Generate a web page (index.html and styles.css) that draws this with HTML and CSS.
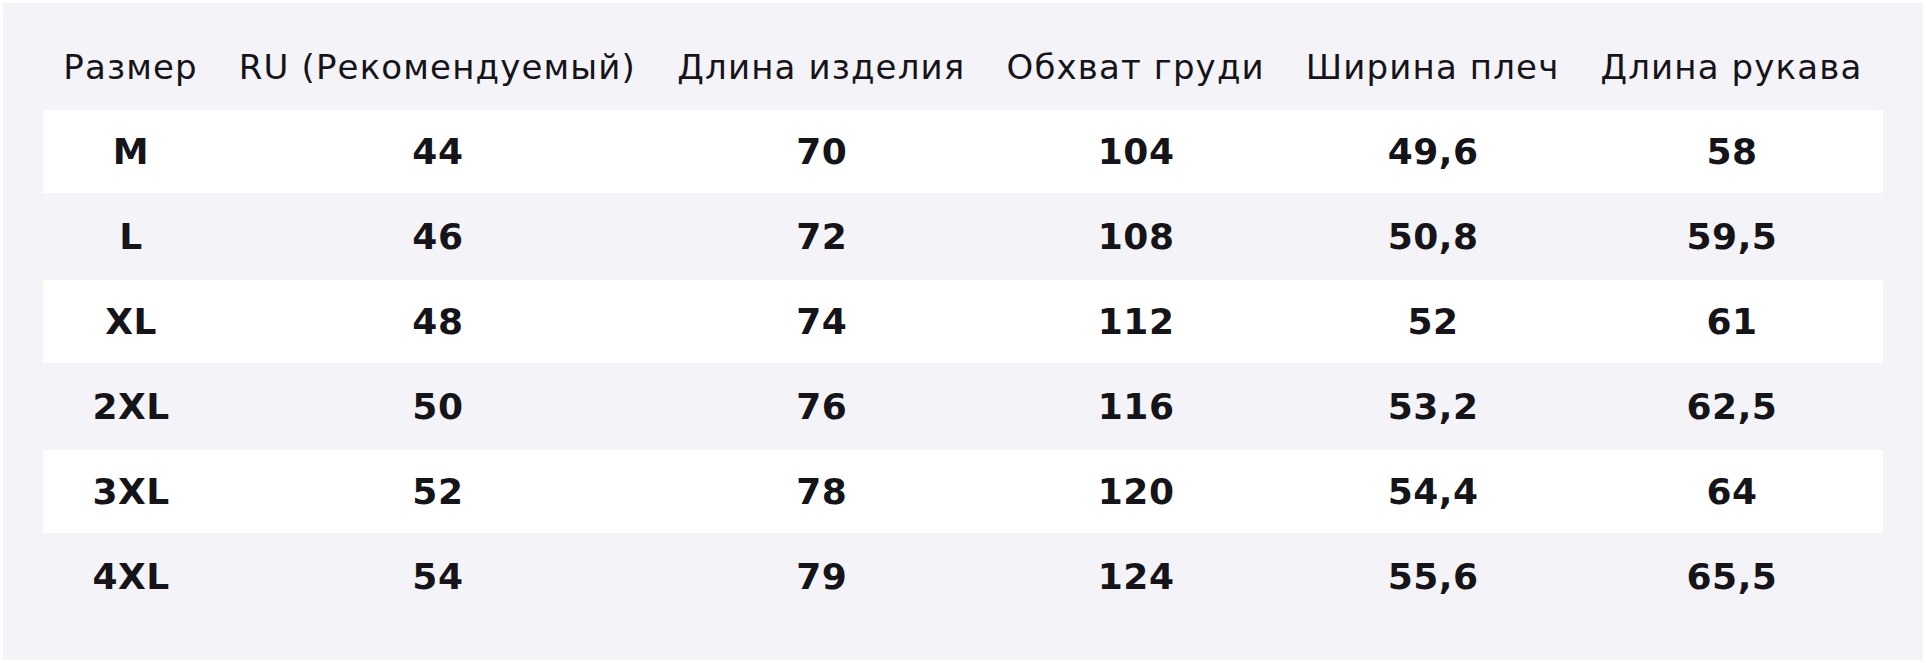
FILE: index.html
```html
<!DOCTYPE html>
<html lang="ru">
<head>
<meta charset="utf-8">
<title>Таблица размеров</title>
<link rel="stylesheet" href="styles.css">
</head>
<body>
<div class="sheet">
  <table class="sizes">
    <thead>
      <tr>
        <th>Размер</th>
        <th>RU (Рекомендуемый)</th>
        <th>Длина изделия</th>
        <th>Обхват груди</th>
        <th>Ширина плеч</th>
        <th>Длина рукава</th>
      </tr>
    </thead>
    <tbody>
      <tr class="odd"><td>M</td><td>44</td><td>70</td><td>104</td><td>49,6</td><td>58</td></tr>
      <tr><td>L</td><td>46</td><td>72</td><td>108</td><td>50,8</td><td>59,5</td></tr>
      <tr class="odd"><td>XL</td><td>48</td><td>74</td><td>112</td><td>52</td><td>61</td></tr>
      <tr><td>2XL</td><td>50</td><td>76</td><td>116</td><td>53,2</td><td>62,5</td></tr>
      <tr class="odd"><td>3XL</td><td>52</td><td>78</td><td>120</td><td>54,4</td><td>64</td></tr>
      <tr><td>4XL</td><td>54</td><td>79</td><td>124</td><td>55,6</td><td>65,5</td></tr>
    </tbody>
  </table>
</div>
</body>
</html>
```
FILE: styles.css
```css
html, body {
  margin: 0;
  background: #ffffff;
}
body {
  padding: 3px;
  font-family: "DejaVu Sans", Verdana, sans-serif;
  color: #141419;
}
.sheet {
  background: #f4f3f8;
  width: 1920px;
  height: 657px;
  box-sizing: border-box;
  padding: 38px 40px 40px 40px;
}
.sizes {
  width: 100%;
  border-collapse: separate;
  border-spacing: 0 2px;
}
.sizes th {
  height: 65px;
  padding: 0 20px 18px 20px;
  box-sizing: border-box;
  font-weight: normal;
  font-size: 34px;
  letter-spacing: 1.15px;
  text-align: center;
  white-space: nowrap;
  vertical-align: middle;
}
.sizes td {
  height: 83px;
  padding: 0 20px 0 21px;
  box-sizing: border-box;
  font-weight: bold;
  font-size: 36px;
  letter-spacing: 0.5px;
  text-align: center;
  vertical-align: middle;
}
.sizes tr.odd td {
  background: #ffffff;
}
```
